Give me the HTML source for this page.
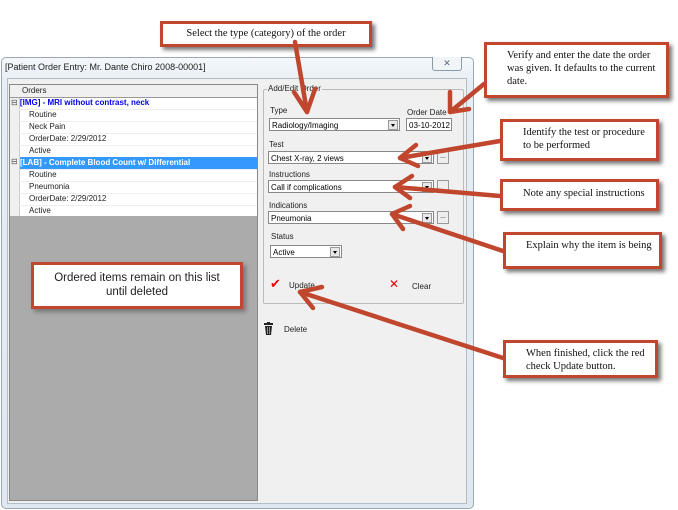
<!DOCTYPE html>
<html><head><style>
body{margin:0;width:678px;height:510px;background:#fff;position:relative;overflow:hidden;font-family:"Liberation Sans",sans-serif;}
.abs{position:absolute;}
.win{left:1px;top:57px;width:471px;height:450px;border:1px solid #9aa8b4;border-radius:5px;background:linear-gradient(#f4f8fb,#e6eef5 25px,#dfe8f0);}
.inner{left:7px;top:78px;width:458px;height:424px;background:#f0f0f0;border:1px solid #b4bcc4;}
.title{left:5px;top:62px;font-size:9px;color:#222;}
.close{left:432px;top:57px;width:28px;height:13px;border:1px solid #8a9aa8;border-top:none;border-radius:0 0 3px 3px;background:#f2f5f8;font-size:9px;text-align:center;color:#667;line-height:13px;}
.tree{left:9px;top:84px;width:247px;height:132px;background:#fff;border:1px solid #888;font-size:8px;color:#222;}
.gray{left:9px;top:216px;width:247px;height:284px;background:#ababab;border:1px solid #888;border-top:none;}
.row{position:absolute;left:0;width:247px;height:11.6px;border-bottom:1px solid #eee;line-height:11px;}
.ctl{font-size:8px;color:#222;}
.box{background:#fff;border:1px solid #888;height:13px;font-size:8px;line-height:13px;padding-left:2px;box-sizing:border-box;}
.dd{position:absolute;right:1px;top:1px;width:10px;height:10px;background:#e8e8e8;border:1px solid #999;box-sizing:border-box;}
.dd:after{content:"";position:absolute;left:2px;top:3px;border-left:2.5px solid transparent;border-right:2.5px solid transparent;border-top:3px solid #000;}
.btn{width:12px;height:13px;border:1px solid #999;background:#eee;font-size:7px;text-align:center;line-height:10px;box-sizing:border-box;}
.call{background:#fff;border:3px solid #c0462d;box-shadow:3px 3px 4px #777;font-family:"Liberation Serif",serif;font-size:10.5px;color:#111;box-sizing:border-box;line-height:13px;}
</style></head><body>
<div class="abs win"></div>
<div class="abs title">[Patient Order Entry: Mr. Dante Chiro 2008-00001]</div>
<div class="abs close">✕</div>
<div class="abs inner"></div>
<div class="abs tree">
 <div class="abs" style="left:0;top:0;width:9px;height:132px;background:#f0f0f0;border-right:1px solid #ccc;"></div>
 <div class="row" style="top:0;background:#f0f0f0;border-bottom:1px solid #999;"><span style="margin-left:12px">Orders</span></div>
 <div class="row" style="top:12px;color:#0000ee;font-weight:bold;"><span style="margin-left:1px;font-weight:normal;color:#555">⊟</span> [IMG] - MRI without contrast, neck</div>
 <div class="row" style="top:24px;"><span style="margin-left:19px">Routine</span></div>
 <div class="row" style="top:36px;"><span style="margin-left:19px">Neck Pain</span></div>
 <div class="row" style="top:48px;"><span style="margin-left:19px">OrderDate: 2/29/2012</span></div>
 <div class="row" style="top:60px;"><span style="margin-left:19px">Active</span></div>
 <div class="row" style="top:72px;left:10px;width:237px;background:#3399ff;color:#fff;font-weight:bold;">[LAB] - Complete Blood Count w/ Differential</div>
 <div class="abs" style="left:1px;top:72px;font-size:8px;color:#555">⊟</div>
 <div class="row" style="top:84px;"><span style="margin-left:19px">Routine</span></div>
 <div class="row" style="top:96px;"><span style="margin-left:19px">Pneumonia</span></div>
 <div class="row" style="top:108px;"><span style="margin-left:19px">OrderDate: 2/29/2012</span></div>
 <div class="row" style="top:120px;border:none"><span style="margin-left:19px">Active</span></div>
</div>
<div class="abs gray"></div>

<div class="abs" style="left:263px;top:89px;width:199px;height:213px;border:1px solid #bbb;border-radius:2px;"></div>
<div class="abs ctl" style="left:267px;top:84px;background:#f0f0f0;padding:0 1px;">Add/Edit Order</div>
<div class="abs ctl" style="left:270px;top:106px;">Type</div>
<div class="abs ctl" style="left:407px;top:108px;">Order Date</div>
<div class="abs box" style="left:269px;top:118px;width:131px;">Radiology/Imaging<div class="dd"></div></div>
<div class="abs box" style="left:406px;top:118px;width:46px;">03-10-2012</div>
<div class="abs ctl" style="left:269px;top:140px;">Test</div>
<div class="abs box" style="left:268px;top:151px;width:166px;">Chest X-ray, 2 views<div class="dd"></div></div>
<div class="abs btn" style="left:437px;top:151px;">...</div>
<div class="abs ctl" style="left:269px;top:170px;">Instructions</div>
<div class="abs box" style="left:268px;top:180px;width:166px;">Call if complications<div class="dd"></div></div>
<div class="abs btn" style="left:437px;top:180px;"></div>
<div class="abs ctl" style="left:269px;top:201px;">Indications</div>
<div class="abs box" style="left:268px;top:211px;width:166px;">Pneumonia<div class="dd"></div></div>
<div class="abs btn" style="left:437px;top:211px;">...</div>
<div class="abs ctl" style="left:271px;top:232px;">Status</div>
<div class="abs box" style="left:270px;top:245px;width:72px;">Active<div class="dd"></div></div>
<div class="abs" style="left:270px;top:276px;color:#e00;font-size:13px;">✔</div>
<div class="abs ctl" style="left:289px;top:281px;">Update</div>
<div class="abs" style="left:389px;top:277px;color:#e00;font-size:12px;">✕</div>
<div class="abs ctl" style="left:412px;top:282px;">Clear</div>
<svg class="abs" style="left:263px;top:322px" width="11" height="13"><rect x="1" y="1" width="9" height="2" fill="#222"/><rect x="4" y="0" width="3" height="1" fill="#222"/><path d="M2 4h7l-1 9H3z" fill="#222"/><path d="M4.5 5v7M6.5 5v7" stroke="#aaa" stroke-width="0.8"/></svg>
<div class="abs ctl" style="left:284px;top:325px;">Delete</div>

<div class="abs call" style="left:160px;top:21px;width:212px;height:26px;text-align:center;padding-top:3px;">Select the type (category) of the order</div>
<div class="abs call" style="left:484px;top:42px;width:185px;height:56px;padding:4px 6px 0 20px;">Verify and enter the date the order was given. It defaults to the current date.</div>
<div class="abs call" style="left:500px;top:119px;width:159px;height:42px;padding:4px 4px 0 20px;">Identify the test or procedure to be performed</div>
<div class="abs call" style="left:500px;top:179px;width:159px;height:32px;padding:5px 4px 0 20px;">Note any special instructions</div>
<div class="abs call" style="left:503px;top:232px;width:159px;height:37px;padding:4px 4px 0 20px;">Explain why the item is being</div>
<div class="abs call" style="left:503px;top:340px;width:155px;height:38px;padding:4px 4px 0 20px;">When finished, click the red check Update button.</div>
<div class="abs call" style="left:31px;top:262px;width:212px;height:47px;font-family:'Liberation Sans',sans-serif;font-size:11.5px;text-align:center;padding-top:6px;line-height:14px;color:#222;">Ordered items remain on this list<br>until deleted</div>

<svg class="abs" style="left:0;top:0" width="678" height="510">
<g stroke="#c0462d" stroke-width="4.5" fill="none" stroke-linecap="round" stroke-linejoin="round">
<path d="M295 42 L307 112"/><path d="M294 92 L307 112 L315 89"/>
<path d="M484 84 L450 112"/><path d="M450 92 L450 112 L469 109"/>
<path d="M500 141 L400 158"/><path d="M416 145 L400 158 L418 166"/>
<path d="M500 196 L395 187"/><path d="M412 176 L395 187 L410 198"/>
<path d="M503 251 L392 214"/><path d="M410 206 L392 214 L403 229"/>
<path d="M503 358 L300 292"/><path d="M322 287 L300 292 L313 308"/>
</g></svg>
</body></html>
